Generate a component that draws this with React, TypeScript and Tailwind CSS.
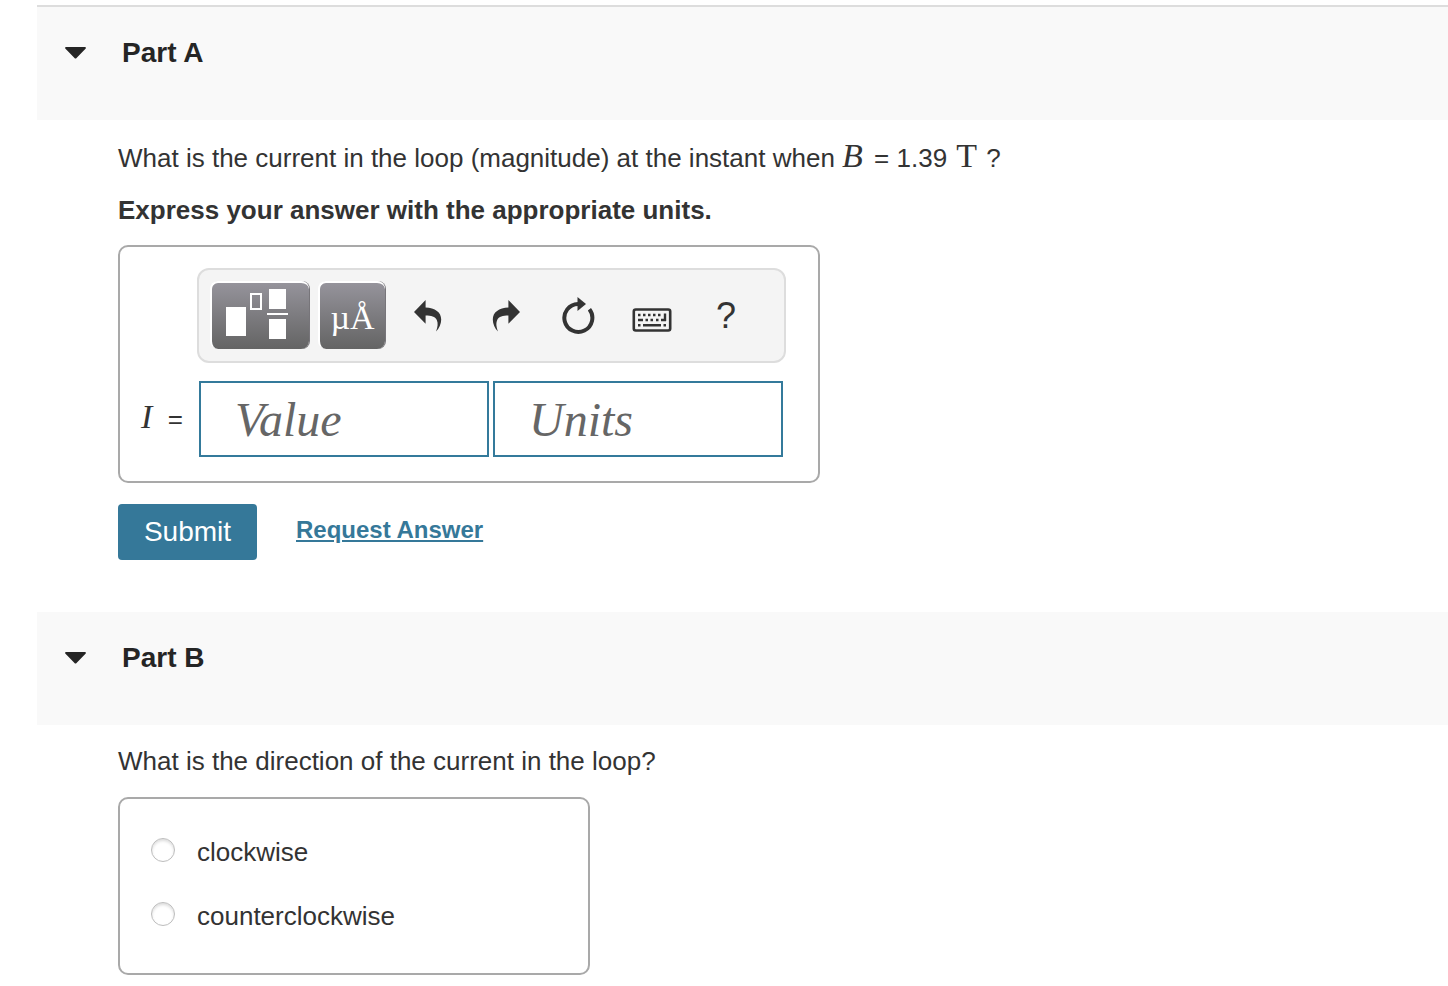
import { useState } from "react";
import type { ReactNode } from "react";

function PartHeader({ title, open, onToggle, first = false }: { title: string; open: boolean; onToggle: () => void; first?: boolean }) {
  return (
    <header className={first ? "border-t-2 border-[#dddddd] bg-[#f9f9f9]" : "bg-[#f9f9f9]"}>
      <h2 className="h-[113px] pt-[26px] pl-7">
        <button type="button" aria-expanded={open} onClick={onToggle} className="flex items-center text-[28px] leading-10 font-bold text-[#252525]">
          <svg width="21" height="12" viewBox="0 0 21 12" className={open ? "mr-9" : "mr-9 -rotate-90"} aria-hidden="true">
            <path d="M1.2 0h18.6c1 0 1.4 1 .7 1.8l-9 9.2c-.6.7-1.4.7-2 0l-9-9.2C-.2 1 .2 0 1.2 0z" fill="#252525" />
          </svg>
          {title}
        </button>
      </h2>
    </header>
  );
}

function ToolButton({ label, children }: { label: string; children: ReactNode }) {
  return (
    <button type="button" aria-label={label} className="flex h-[66px] w-[74px] items-center justify-center text-[#333333]">
      {children}
    </button>
  );
}

function CurvedArrow({ flipped = false }: { flipped?: boolean }) {
  return (
    <svg width="28" height="32" viewBox="0 0 28 32" className={flipped ? "ml-1 -scale-x-100" : "mr-1"} aria-hidden="true">
      <path d="M0 12 11.6 0v7.6C21 7.8 27.2 12.5 27.2 19.5c0 4.600-2 8.800-5.200 12 1.800-4.600 2.200-8.500.8-11.500-1.700-3.600-5.600-4.600-11.200-4.600v8.300z" fill="currentColor" />
    </svg>
  );
}

const dark = "rounded-[8px] border-t-2 border-l-2 border-white bg-linear-to-b from-[#97959d] to-[#646464] bg-origin-border shadow-[1px_0_0_#77757a]";

function Toolbar() {
  return (
    <div role="toolbar" aria-label="Math entry" className="flex h-[95px] items-start rounded-[12px] border-2 border-[#dddddd] bg-[#f4f4f4] pt-[11px] pl-[11px]">
      <button type="button" aria-label="Templates" className={`h-[68px] w-[99px] ${dark}`}>
        <svg width="97" height="66" viewBox="0 0 97 66" fill="#fff" aria-hidden="true">
          <rect x="14" y="24" width="20" height="29" />
          <rect x="39" y="11" width="10" height="15" fill="none" stroke="#fff" strokeWidth="2" />
          <rect x="57" y="6" width="17" height="20" />
          <rect x="55" y="30" width="21" height="2" />
          <rect x="57" y="36" width="17" height="20" />
        </svg>
      </button>
      <button type="button" aria-label="Symbols" className={`ml-[9px] h-[68px] w-[67px] pt-1 text-center font-['Liberation_Serif',serif] text-[34px] leading-none text-white ${dark}`}>
        µÅ
      </button>
      <div className="mt-[2px] ml-2 flex">
        <ToolButton label="Undo"><CurvedArrow /></ToolButton>
        <ToolButton label="Redo"><CurvedArrow flipped /></ToolButton>
        <ToolButton label="Reset">
          <svg width="34" height="38" viewBox="0 0 34 38" aria-hidden="true">
            <path d="M17 6.9A14 14 0 1 0 28.4 12.3" fill="none" stroke="currentColor" strokeWidth="4" />
            <path d="M16.5 0 25 7 16.5 14z" fill="currentColor" />
          </svg>
        </ToolButton>
        <ToolButton label="Keyboard shortcuts">
          <svg width="40" height="24" viewBox="0 0 40 24" className="mt-2" aria-hidden="true">
            <rect x="1.8" y="1.5" width="36.4" height="21" rx="2" fill="none" stroke="currentColor" strokeWidth="2.6" />
            <path d="M6 7h2.5M11 7h2.5M16 7h2.5M21 7h2.5M26 7h2.5M6 12h5M13.5 12h2.5M18.500 12h2.5M24 12h2.5M29 12h5M6 17.2h2.500M11 17.2h18M31.5 17.2h2.5" stroke="currentColor" strokeWidth="2.4" />
            <path d="M33 5.5V13" stroke="currentColor" strokeWidth="2.4" />
          </svg>
        </ToolButton>
        <ToolButton label="Help"><span className="text-[36px] leading-none">?</span></ToolButton>
      </div>
    </div>
  );
}

const field = "h-[76px] w-[290px] border-2 border-[#347a9b] bg-white pl-[34px] font-['Liberation_Serif',serif] text-[48px] italic text-[#333333] outline-none placeholder:text-[#666666] placeholder:opacity-100";
const math = "font-['Liberation_Serif',serif] text-[34px] leading-none";

export default function App() {
  const [openA, setOpenA] = useState(true);
  const [openB, setOpenB] = useState(true);

  return (
    <main className="bg-white pt-[5px] pl-[37px] font-['Liberation_Sans',Arial,sans-serif] text-[26px] text-[#333333]">
      <section>
        <PartHeader first title="Part A" open={openA} onToggle={() => setOpenA(!openA)} />
        {openA && (
          <form className="pt-3 pb-[52px] pl-[81px]" onSubmit={(e) => e.preventDefault()}>
            <p className="leading-[52px]">
              What is the current in the loop (magnitude) at the instant when <i className={`mr-1 ${math}`}>B</i> = 1.39 <span className={`mx-[2px] ${math}`}>T</span> ?
            </p>
            <p className="leading-[52px] font-bold">Express your answer with the appropriate units.</p>
            <div className="mt-[9px] w-fit rounded-[10px] border-2 border-[#a9a9a9] pt-[21px] pr-8 pb-6 pl-[21px]">
              <div className="pl-14">
                <Toolbar />
              </div>
              <div className="mt-[18px] flex items-center">
                <label htmlFor="value" className="flex w-[58px] items-baseline justify-between pr-4">
                  <i className={math}>I</i>
                  <span>=</span>
                </label>
                <div className="flex gap-1 pr-[3px]">
                  <input id="value" placeholder="Value" className={field} />
                  <input aria-label="Units" placeholder="Units" className={field} />
                </div>
              </div>
            </div>
            <div className="mt-[21px] flex items-center">
              <button type="submit" className="h-14 w-[139px] rounded-[4px] bg-[#357899] text-[28px] text-white">Submit</button>
              <a href="#request-answer" className="mb-1 ml-[39px] text-[24px] font-bold text-[#357899] underline decoration-2 underline-offset-2">Request Answer</a>
            </div>
          </form>
        )}
      </section>

      <section>
        <PartHeader title="Part B" open={openB} onToggle={() => setOpenB(!openB)} />
        {openB && (
          <div className="pt-[10px] pb-[11px] pl-[81px]">
            <p id="direction" className="leading-[52px]">What is the direction of the current in the loop?</p>
            <div role="radiogroup" aria-labelledby="direction" className="mt-[10px] flex w-[472px] max-w-full flex-col rounded-[10px] border-2 border-[#a9a9a9] pt-[21px] pb-[25px] pl-[31px]">
              {["clockwise", "counterclockwise"].map((option) => (
                <label key={option} className="flex h-16 items-center">
                  <input type="radio" name="direction" value={option} className="mr-[22px] mb-1 size-6 appearance-none rounded-full border border-[#bdbdbd] bg-white shadow-[inset_0_2px_3px_#dddddd] checked:border-[7px] checked:border-[#357899]" />
                  {option}
                </label>
              ))}
            </div>
          </div>
        )}
      </section>
    </main>
  );
}
